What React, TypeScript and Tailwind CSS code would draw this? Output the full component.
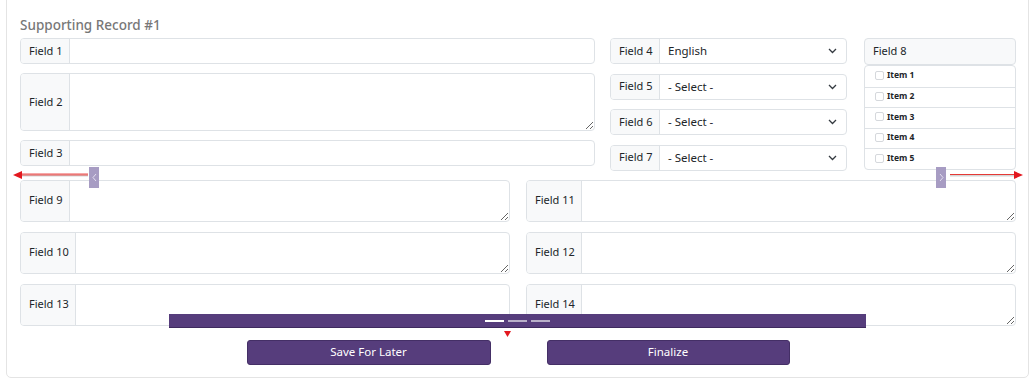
import React from 'react';

const font = { fontFamily: '"Noto Sans", "Open Sans", sans-serif' };

// Label + text input group
function InputRow({ label, height, labelWidth = 'w-[49px]', textarea = false }: { label: string; height: string; labelWidth?: string; textarea?: boolean }) {
  return (
    <div className={`flex ${height} border border-[#dee2e6] rounded-[4px] overflow-hidden bg-white`}>
      <div className={`${labelWidth} shrink-0 flex items-center pl-[8px] bg-[#f8f9fa] border-r border-[#dee2e6] text-[11px] text-[#212529]`}>
        {label}
      </div>
      {textarea ? (
        <textarea className="flex-1 h-full outline-none px-2 py-1 text-[12px]" />
      ) : (
        <input className="flex-1 h-full outline-none px-2 text-[12px]" />
      )}
    </div>
  );
}

function SelectRow({ label, value }: { label: string; value: string }) {
  return (
    <div className="flex h-[26px] border border-[#dee2e6] rounded-[4px] overflow-hidden bg-white">
      <div className="w-[49px] shrink-0 flex items-center pl-[8px] bg-[#f8f9fa] border-r border-[#dee2e6] text-[11px] text-[#212529]">
        {label}
      </div>
      <div className="flex-1 flex items-center justify-between pl-[8px] pr-[9px] text-[11.5px] text-[#212529]">
        <span>{value}</span>
        <svg width="9" height="6" viewBox="0 0 9 6" fill="none">
          <path d="M1 1l3.5 3.5L8 1" stroke="#343a40" strokeWidth="1.3" />
        </svg>
      </div>
    </div>
  );
}

function ScrollTab({ dir }: { dir: 'left' | 'right' }) {
  return (
    <div className="w-[10px] h-[21px] bg-[#a79cc3] flex items-center justify-center">
      <svg width="5" height="9" viewBox="0 0 5 9" fill="none">
        <path d={dir === 'left' ? 'M4 1L1 4.5 4 8' : 'M1 1l3 3.5L1 8'} stroke="#e4dff0" strokeWidth="1" />
      </svg>
    </div>
  );
}

export default function App() {
  const items = ['Item 1', 'Item 2', 'Item 3', 'Item 4', 'Item 5'];

  return (
    <div className="relative w-[1035px] h-[379px] bg-white overflow-hidden" style={font}>
      <div className="ml-[6px] w-[1023px] h-[388px] -mt-[10px] border border-[#e4e4e4] rounded-[5px] pl-[13px] pr-[12px] pt-[24px]">
        <h2 className="text-[13.5px] leading-[20px] text-[#777] font-medium mb-[3px]">Supporting Record #1</h2>

        <div className="flex">
          <div className="w-[575px] flex flex-col gap-[9px]">
            <InputRow label="Field 1" height="h-[26px]" />
            <InputRow label="Field 2" height="h-[58px]" textarea />
            <InputRow label="Field 3" height="h-[26px]" />
          </div>
          <div className="w-[237px] ml-[15px] flex flex-col gap-[9.5px]">
            <SelectRow label="Field 4" value="English" />
            <SelectRow label="Field 5" value="- Select -" />
            <SelectRow label="Field 6" value="- Select -" />
            <SelectRow label="Field 7" value="- Select -" />
          </div>
          <div className="w-[152px] ml-[17px] flex flex-col">
            <div className="h-[27px] flex items-center pl-[8px] bg-[#f8f9fa] border border-[#dee2e6] rounded-[4px] text-[11px] text-[#212529]">
              Field 8
            </div>
            <div className="border border-[#dee2e6] rounded-[4px] bg-white">
              {items.map((it, i) => (
                <div key={it} className={`h-[20.6px] flex items-center pl-[10px] pb-[2px] gap-[3px] ${i > 0 ? 'border-t border-[#dee2e6]' : ''}`}>
                  <span className="w-[9px] h-[9px] border border-[#d5d8dc] rounded-[2px] bg-white" />
                  <span className="text-[8.5px] font-bold text-[#212529]">{it}</span>
                </div>
              ))}
            </div>
          </div>
        </div>

        <div className="grid grid-cols-2 gap-x-[16px] gap-y-[10px] mt-[9px]">
          <InputRow label="Field 9" height="h-[42px]" textarea />
          <InputRow label="Field 11" height="h-[42px]" labelWidth="w-[55px]" textarea />
          <InputRow label="Field 10" height="h-[42px]" labelWidth="w-[55px]" textarea />
          <InputRow label="Field 12" height="h-[42px]" labelWidth="w-[55px]" textarea />
          <InputRow label="Field 13" height="h-[42px]" labelWidth="w-[55px]" textarea />
          <InputRow label="Field 14" height="h-[42px]" labelWidth="w-[55px]" textarea />
        </div>

        <div className="flex justify-center gap-[56px] mt-[14px]">
          <button className="w-[244px] h-[25px] rounded-[3px] bg-[#563d7c] border border-[#442f66] text-white text-[11.5px]">Save For Later</button>
          <button className="w-[243px] h-[25px] rounded-[3px] bg-[#563d7c] border border-[#442f66] text-white text-[11.5px]">Finalize</button>
        </div>
      </div>

      {/* horizontal scroll tabs + red arrows */}
      <div className="absolute left-[89px] top-[167px]"><ScrollTab dir="left" /></div>
      <div className="absolute left-[936px] top-[167px]"><ScrollTab dir="right" /></div>
      <svg className="absolute left-[10px] top-[168px]" width="80" height="14" viewBox="0 0 80 14">
        <line x1="8" y1="7.5" x2="78" y2="7.5" stroke="#888" strokeOpacity="0.35" strokeWidth="2" />
        <line x1="8" y1="6" x2="78" y2="6" stroke="#f28b8b" strokeWidth="1.5" />
        <line x1="8" y1="7" x2="78" y2="7" stroke="#e53935" strokeWidth="0.8" />
        <polygon points="3,7 12,3 12,11" fill="#e3181f" />
      </svg>
      <svg className="absolute left-[947px] top-[168px]" width="80" height="14" viewBox="0 0 80 14">
        <line x1="3" y1="7.5" x2="70" y2="7.5" stroke="#888" strokeOpacity="0.35" strokeWidth="2" />
        <line x1="3" y1="6.5" x2="70" y2="6.5" stroke="#e53935" strokeWidth="1.2" />
        <polygon points="76,7 67,3 67,11" fill="#e3181f" />
      </svg>

      {/* bottom scroll bar overlay */}
      <div className="absolute left-[169px] top-[314px] w-[697px] h-[14px] bg-[#563d7c] border-b border-[#3e2a5e] flex items-center pl-[316px] gap-[4px]">
        <span className="w-[19px] h-[2px] bg-white" />
        <span className="w-[19px] h-[2px] bg-[#b9b0c9]" />
        <span className="w-[19px] h-[2px] bg-[#b9b0c9]" />
      </div>
      <svg className="absolute left-[503px] top-[330px]" width="9" height="8" viewBox="0 0 9 8">
        <polygon points="1,1 8,1 4.5,7" fill="#e3181f" />
      </svg>
    </div>
  );
}
